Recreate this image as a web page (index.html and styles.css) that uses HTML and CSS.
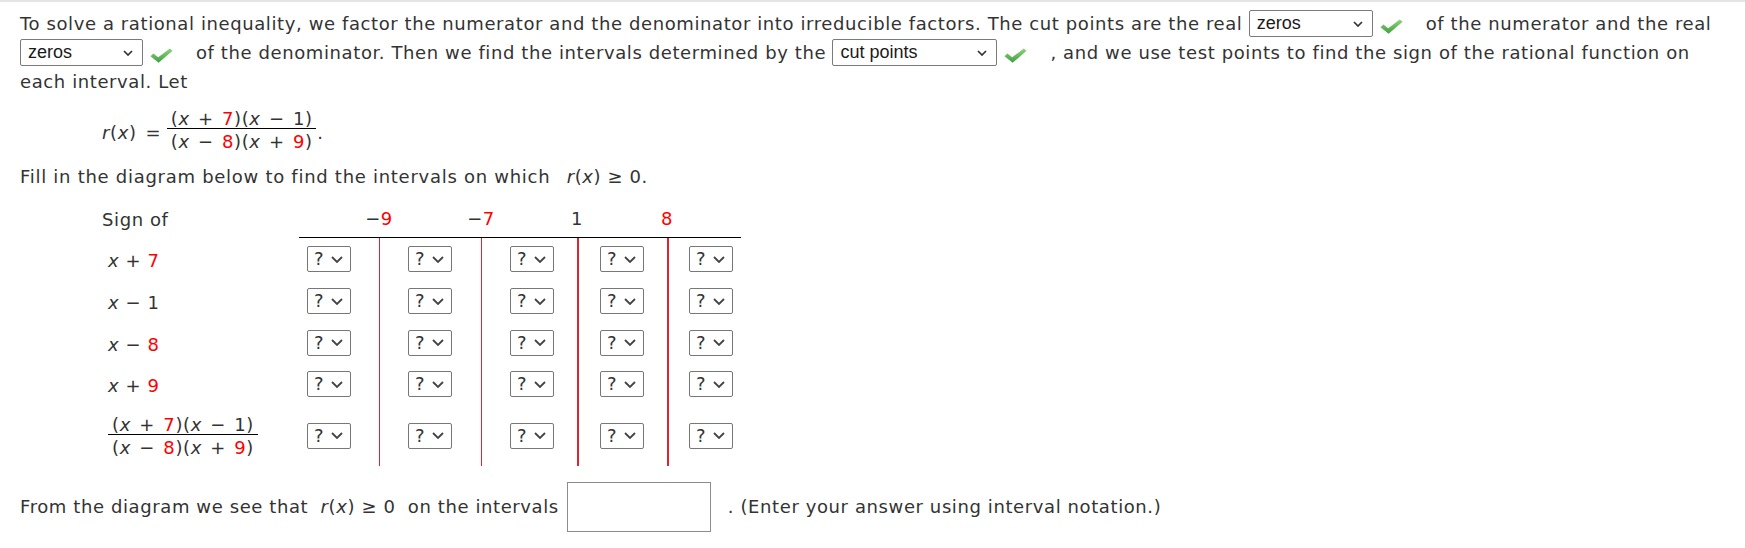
FILE: index.html
```html
<!DOCTYPE html>
<html lang="en">
<head>
<meta charset="utf-8">
<title>Rational inequality</title>
<link rel="stylesheet" href="styles.css">
</head>
<body>
<svg class="defs" width="0" height="0" aria-hidden="true">
  <defs>
    <linearGradient id="chkg" x1="0" y1="0" x2="0" y2="1">
      <stop offset="0" stop-color="#8fd57e"/>
      <stop offset="1" stop-color="#3f9f3f"/>
    </linearGradient>
    <symbol id="chk" viewBox="0 0 23 15">
      <path d="M0.5 8.2 L3.4 5.4 L8.2 9.3 L19.8 0.4 L22.6 2.8 L8.6 14.8 Z" fill="url(#chkg)"/>
    </symbol>
    <symbol id="chev" viewBox="0 0 10 6">
      <path d="M1 1 L5 5 L9 1" fill="none" stroke="#333" stroke-width="1.7"/>
    </symbol>
    <symbol id="chevs" viewBox="0 0 12 7">
      <path d="M1 1 L6 6 L11 1" fill="none" stroke="#444" stroke-width="1.8"/>
    </symbol>
  </defs>
</svg>
<main class="page">
  <p class="intro">To solve a rational inequality, we factor the numerator and the denominator into irreducible factors. The cut points are the real <span class="dd dd-zeros"><span class="dd-in"><span>zeros</span><svg class="chev"><use href="#chev"/></svg></span></span><svg class="check"><use href="#chk"/></svg>of the numerator and the real<br><span class="dd dd-zeros2"><span class="dd-in"><span>zeros</span><svg class="chev"><use href="#chev"/></svg></span></span><svg class="check"><use href="#chk"/></svg>of the denominator. Then we find the intervals determined by the <span class="dd dd-cut"><span class="dd-in"><span>cut points</span><svg class="chev"><use href="#chev"/></svg></span></span><svg class="check"><use href="#chk"/></svg>, and we use test points to find the sign of the rational function on<br>each interval. Let</p>

  <div class="formula">
    <span class="formula-lhs"><i>r</i>(<i>x</i>)<span class="eq">=</span></span>
    <span class="frac">
      <span class="frac-num">(<i>x</i> + <span class="red">7</span>)(<i>x</i> − 1)</span>
      <span class="frac-den">(<i>x</i> − <span class="red">8</span>)(<i>x</i> + <span class="red">9</span>)</span>
    </span><span class="dot">.</span>
  </div>

  <p class="lead">Fill in the diagram below to find the intervals on which <span class="gap"><i>r</i>(<i>x</i>) ≥ 0.</span></p>

  <div class="diagram">
    <div class="head">
      <div class="head-label">Sign of</div>
      <div class="head-cell"><span class="cut">−<span class="red">9</span></span></div>
      <div class="head-cell"><span class="cut">−<span class="red">7</span></span></div>
      <div class="head-cell"><span class="cut">1</span></div>
      <div class="head-cell"><span class="cut red">8</span></div>
      <div class="head-cell"></div>
    </div>
    <div class="body">
      <div class="col labels">
        <div class="slot s1"><i>x</i>&nbsp;+&nbsp;<span class="red">7</span></div>
        <div class="slot s2"><i>x</i>&nbsp;−&nbsp;1</div>
        <div class="slot s3"><i>x</i>&nbsp;−&nbsp;<span class="red">8</span></div>
        <div class="slot s4"><i>x</i>&nbsp;+&nbsp;<span class="red">9</span></div>
        <div class="slot s5">
          <span class="frac">
            <span class="frac-num">(<i>x</i> + <span class="red">7</span>)(<i>x</i> − 1)</span>
            <span class="frac-den">(<i>x</i> − <span class="red">8</span>)(<i>x</i> + <span class="red">9</span>)</span>
          </span>
        </div>
      </div>
      <div class="col c1">
        <div class="slot s1"><span class="q"><span>?</span><svg class="chevs"><use href="#chevs"/></svg></span></div>
        <div class="slot s2"><span class="q"><span>?</span><svg class="chevs"><use href="#chevs"/></svg></span></div>
        <div class="slot s3"><span class="q"><span>?</span><svg class="chevs"><use href="#chevs"/></svg></span></div>
        <div class="slot s4"><span class="q"><span>?</span><svg class="chevs"><use href="#chevs"/></svg></span></div>
        <div class="slot s5"><span class="q"><span>?</span><svg class="chevs"><use href="#chevs"/></svg></span></div>
      </div>
      <div class="col c2">
        <div class="slot s1"><span class="q"><span>?</span><svg class="chevs"><use href="#chevs"/></svg></span></div>
        <div class="slot s2"><span class="q"><span>?</span><svg class="chevs"><use href="#chevs"/></svg></span></div>
        <div class="slot s3"><span class="q"><span>?</span><svg class="chevs"><use href="#chevs"/></svg></span></div>
        <div class="slot s4"><span class="q"><span>?</span><svg class="chevs"><use href="#chevs"/></svg></span></div>
        <div class="slot s5"><span class="q"><span>?</span><svg class="chevs"><use href="#chevs"/></svg></span></div>
      </div>
      <div class="col c3">
        <div class="slot s1"><span class="q"><span>?</span><svg class="chevs"><use href="#chevs"/></svg></span></div>
        <div class="slot s2"><span class="q"><span>?</span><svg class="chevs"><use href="#chevs"/></svg></span></div>
        <div class="slot s3"><span class="q"><span>?</span><svg class="chevs"><use href="#chevs"/></svg></span></div>
        <div class="slot s4"><span class="q"><span>?</span><svg class="chevs"><use href="#chevs"/></svg></span></div>
        <div class="slot s5"><span class="q"><span>?</span><svg class="chevs"><use href="#chevs"/></svg></span></div>
      </div>
      <div class="col c4">
        <div class="slot s1"><span class="q"><span>?</span><svg class="chevs"><use href="#chevs"/></svg></span></div>
        <div class="slot s2"><span class="q"><span>?</span><svg class="chevs"><use href="#chevs"/></svg></span></div>
        <div class="slot s3"><span class="q"><span>?</span><svg class="chevs"><use href="#chevs"/></svg></span></div>
        <div class="slot s4"><span class="q"><span>?</span><svg class="chevs"><use href="#chevs"/></svg></span></div>
        <div class="slot s5"><span class="q"><span>?</span><svg class="chevs"><use href="#chevs"/></svg></span></div>
      </div>
      <div class="col c5">
        <div class="slot s1"><span class="q"><span>?</span><svg class="chevs"><use href="#chevs"/></svg></span></div>
        <div class="slot s2"><span class="q"><span>?</span><svg class="chevs"><use href="#chevs"/></svg></span></div>
        <div class="slot s3"><span class="q"><span>?</span><svg class="chevs"><use href="#chevs"/></svg></span></div>
        <div class="slot s4"><span class="q"><span>?</span><svg class="chevs"><use href="#chevs"/></svg></span></div>
        <div class="slot s5"><span class="q"><span>?</span><svg class="chevs"><use href="#chevs"/></svg></span></div>
      </div>
    </div>
  </div>

  <div class="answer">
    <span>From the diagram we see that <span class="gap"><i>r</i>(<i>x</i>) ≥ 0</span><span class="gap-r"> on the intervals</span></span>
    <input class="answer-box" type="text" aria-label="answer">
    <span>. (Enter your answer using interval notation.)</span>
  </div>
</main>
</body>
</html>
```

FILE: styles.css
```css
* { box-sizing: border-box; }

html, body { background: #fff; }

body {
  margin: 0;
  color: #333;
  font-family: "DejaVu Sans", Verdana, sans-serif;
  font-size: 18px;
  letter-spacing: 0.6px;
}

.defs { position: absolute; width: 0; height: 0; overflow: hidden; }

.page {
  border-top: 2px solid #e4e4e4;
  padding: 0 20px;
}

i { font-style: italic; }
.red { color: #f00; font-style: normal; }

.intro {
  margin: 7px 0 0;
  line-height: 29px;
  white-space: nowrap;
}

.dd {
  display: inline-block;
  overflow: hidden;
  vertical-align: -7px;
  height: 27px;
  border: 1px solid #7a7a7a;
  border-radius: 2px;
  background: #fff;
  letter-spacing: 0;
}
.dd-zeros { width: 124px; }
.dd-zeros2 { width: 123px; }
.dd-cut { width: 165px; }

.dd-in {
  display: flex;
  align-items: center;
  justify-content: space-between;
  height: 100%;
  padding: 0 9px 0 7px;
  font-family: "Liberation Sans", Arial, sans-serif;
  font-size: 18px;
  color: #1a1a1a;
}

.chev { width: 10px; height: 6px; }

.check {
  width: 23px;
  height: 15px;
  margin: 0 23px 0 7px;
  vertical-align: -4px;
}

.formula {
  display: flex;
  align-items: center;
  margin: 14px 0 0 82px;
  line-height: 28px;
}
.formula-lhs { margin-top: 4px; margin-right: 6px; white-space: nowrap; }
.eq { margin-left: 9px; }
.dot { align-self: center; margin-top: 4px; margin-left: 1px; }

.frac {
  display: inline-flex;
  flex-direction: column;
  align-items: stretch;
  width: 149px;
  text-align: center;
  white-space: nowrap;
  word-spacing: 2px;
}
.frac-num { line-height: 18px; }
.frac-den { line-height: 18px; padding-top: 4px; border-top: 1px solid #000; }

.lead {
  margin: 12px 0 0;
  line-height: 28px;
  letter-spacing: 0.72px;
}
.gap { margin-left: 6px; letter-spacing: 0.6px; }
.lead .gap { margin-left: 10px; }
.gap-r { margin-left: 6px; }

.diagram { margin-left: 82px; }

.head, .body {
  display: grid;
  grid-template-columns: 197px 80px 102px 96px 90px 74px;
}

.head { height: 47px; line-height: 28px; }

.head-label {
  display: flex;
  align-items: flex-end;
  padding-bottom: 4px;
}

.head-cell {
  display: flex;
  justify-content: flex-end;
  align-items: flex-end;
  padding-bottom: 4px;
  border-bottom: 1px solid #000;
}

.cut { transform: translateX(50%); white-space: nowrap; }

.col { display: flex; flex-direction: column; }
.labels { padding-left: 6px; }
.labels .slot { padding-top: 4px; }
.labels .s5 { padding-top: 2px; }
.labels .frac { width: 150px; }
.c1 { padding-left: 8px; }
.c2 { border-left: 1px solid #dd2430; padding-left: 28px; }
.c3 { border-left: 1px solid #dd2430; padding-left: 28px; }
.c4 { border-left: 2px solid #dd2430; padding-left: 21px; }
.c5 { border-left: 2px solid #dd2430; padding-left: 20px; }

.slot {
  display: flex;
  align-items: center;
  white-space: nowrap;
  line-height: 28px;
}
.s1 { height: 42px; }
.s2 { height: 42px; }
.s3 { height: 41px; }
.s4 { height: 42px; }
.s5 { height: 61px; }

.q {
  display: flex;
  align-items: center;
  justify-content: space-between;
  width: 44px;
  height: 26px;
  padding: 0 7px 0 6px;
  border: 1px solid #777;
  border-radius: 2px;
  background: #fff;
  color: #333;
  line-height: 1;
  letter-spacing: 0;
}
.chevs { width: 12px; height: 7px; }

.answer {
  display: flex;
  align-items: center;
  margin-top: 16px;
  line-height: 28px;
  white-space: nowrap;
}

.answer-box {
  width: 144px;
  height: 50px;
  margin: 0 17px 0 8px;
  border: 1px solid #8c8c8c;
  border-radius: 0;
  background: #fff;
  font: inherit;
  padding: 0 6px;
}
```
